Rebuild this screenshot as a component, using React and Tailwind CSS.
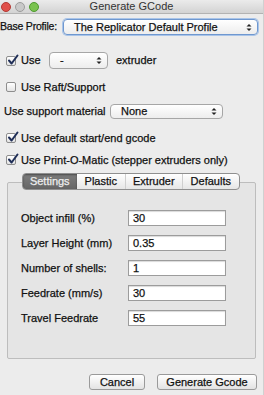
import React from "react";

const font = { fontFamily: '"Liberation Sans", Arial, sans-serif' };

function Check({ checked }) {
  return (
    <span className="relative w-[10px] h-[10px] rounded-[2px] border border-[#8e8e8e] bg-gradient-to-b from-white to-[#e4e4e4] shrink-0">
      {checked && (
        <svg className="absolute -top-[3px] left-[0px]" width="12" height="12" viewBox="0 0 12 12">
          <path d="M2 6.5 L4.6 9.5 L10.5 1.5" fill="none" stroke="#1f2e57" strokeWidth="2" strokeLinecap="round" strokeLinejoin="round" />
        </svg>
      )}
    </span>
  );
}

function Arrows() {
  return (
    <svg width="6" height="9" viewBox="0 0 6 9" className="shrink-0">
      <path d="M0.5 3.5 L3 1 L5.5 3.5 Z" fill="#222" />
      <path d="M0.5 5.5 L3 8 L5.5 5.5 Z" fill="#222" />
    </svg>
  );
}

function Select({ value, className, focus }) {
  return (
    <div
      className={
        "flex items-center justify-between rounded-[4px] border bg-gradient-to-b from-white to-[#ededed] pl-[10px] pr-[5px] text-[11px] text-[#111] " +
        (focus ? "border-[#6f98d0] shadow-[0_0_0_1px_#a9c4e8] " : "border-[#a6a6a6] ") +
        className
      }
    >
      <span>{value}</span>
      <Arrows />
    </div>
  );
}

function CheckRow({ label, checked, className }) {
  return (
    <div className={"flex items-center gap-[5px] pl-[6px] h-[14px] text-[11px] text-[#111] " + className}>
      <Check checked={checked} />
      <span>{label}</span>
    </div>
  );
}

const tabs = ["Settings", "Plastic", "Extruder", "Defaults"];
const tabWidths = ["w-[54px]", "w-[49px]", "w-[57px]", "w-[58px]"];

const fields = [
  ["Object infill (%)", "30"],
  ["Layer Height (mm)", "0.35"],
  ["Number of shells:", "1"],
  ["Feedrate (mm/s)", "30"],
  ["Travel Feedrate", "55"],
];

export default function App() {
  return (
    <div
      className="w-[264px] h-[395px] bg-[#ececec] flex flex-col overflow-hidden border-r border-[#d0d0d0] [-webkit-text-stroke:0.25px]"
      style={font}
    >
      {/* title bar */}
      <div className="relative h-[14px] bg-gradient-to-b from-[#ebebeb] to-[#d3d3d3] border-b border-[#b3b3b3] flex items-center">
        <div className="flex gap-[4px] pl-[1px]">
          <span className="w-[10px] h-[10px] rounded-full bg-[#e0504a] border border-[#b33a35]" />
          <span className="w-[10px] h-[10px] rounded-full bg-[#c9c9c9] border border-[#9d9d9d]" />
          <span className="w-[10px] h-[10px] rounded-full bg-[#7ac34f] border border-[#4f9a31]" />
        </div>
        <span className="absolute left-0 right-0 text-center text-[11px] text-[#333] leading-none pointer-events-none [-webkit-text-stroke:0px]">
          Generate GCode
        </span>
      </div>

      {/* base profile */}
      <div className="mt-[5px] h-[16px] flex items-center text-[11px] text-[#111]">
        <span className="w-[63px] text-[10.5px] tracking-[-0.2px]">Base Profile:</span>
        <Select value="The Replicator Default Profile" className="w-[195px] h-[16px]" focus />
      </div>

      {/* extruder */}
      <div className="mt-[17px] h-[17px] flex items-center text-[11px] text-[#111] pl-[6px]">
        <Check checked />
        <span className="ml-[5px] w-[28px]">Use</span>
        <Select value="-" className="w-[59px] h-[17px]" />
        <span className="ml-[8px]">extruder</span>
      </div>

      <CheckRow label="Use Raft/Support" className="mt-[11px]" />

      {/* support material */}
      <div className="mt-[10px] h-[15px] flex items-center text-[11px] text-[#111]">
        <span className="w-[110px] pl-[4px]">Use support material</span>
        <Select value="None" className="w-[113px] h-[15px]" />
      </div>

      <CheckRow label="Use default start/end gcode" checked className="mt-[12px]" />
      <CheckRow label="Use Print-O-Matic (stepper extruders only)" checked className="mt-[8px]" />

      {/* tabs + group */}
      <div className="mt-[6px] flex flex-col">
        <div className="relative z-10 ml-[22px] flex h-[17px] w-[218px] rounded-[4px] border border-[#8f8f8f] bg-gradient-to-b from-white to-[#e6e6e6] overflow-hidden text-[11px]">
          {tabs.map((t, i) => (
            <div
              key={t}
              className={
                "flex items-center justify-center " +
                tabWidths[i] +
                (i === 0
                  ? " bg-gradient-to-b from-[#7d7d7d] to-[#666] text-[#ededed] shadow-[inset_0_1px_2px_rgba(0,0,0,0.4)]"
                  : " text-[#111]") +
                (i > 1 ? " border-l border-[#cfcfcf]" : "")
              }
            >
              {t}
            </div>
          ))}
        </div>
        <div className="-mt-[8px] mx-[7px] h-[177px] border border-[#bdbdbd] bg-[#e5e5e5] rounded-[2px] pt-[27px] flex flex-col gap-[9px]">
          {fields.map(([label, value]) => (
            <div key={label} className="flex items-center h-[16px] text-[11px] text-[#111]">
              <span className="w-[120px] pl-[13px]">{label}</span>
              <div className="w-[98px] h-[16px] bg-white border border-[#9c9c9c] shadow-[inset_0_1px_1px_rgba(0,0,0,0.15)] flex items-center pl-[4px]">
                {value}
              </div>
            </div>
          ))}
        </div>
      </div>

      {/* buttons */}
      <div className="mt-[15px] flex justify-end gap-[12px] pr-[6px] text-[11px] text-[#111]">
        <button className="w-[56px] h-[16px] rounded-[3px] border border-[#9a9a9a] bg-gradient-to-b from-white to-[#e3e3e3] flex items-center justify-center">
          Cancel
        </button>
        <button className="w-[100px] h-[16px] rounded-[3px] border border-[#9a9a9a] bg-gradient-to-b from-white to-[#e3e3e3] flex items-center justify-center">
          Generate Gcode
        </button>
      </div>
    </div>
  );
}
